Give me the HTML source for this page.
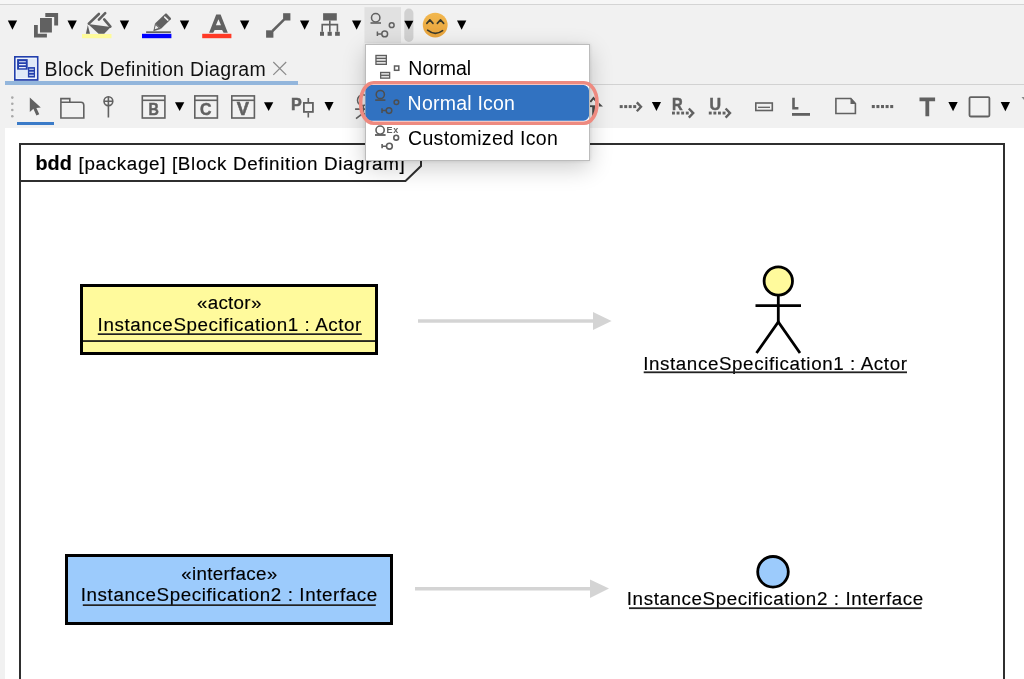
<!DOCTYPE html>
<html><head><meta charset="utf-8">
<style>
html,body{margin:0;padding:0;}
body{width:1024px;height:679px;position:relative;overflow:hidden;background:#f1f1f1;font-family:"Liberation Sans",sans-serif;}
.a{position:absolute;}
.tri{position:absolute;width:0;height:0;border-left:4.5px solid transparent;border-right:4.5px solid transparent;border-top:9px solid #000;}
svg{position:absolute;overflow:visible;will-change:transform;}
.dg{font-family:"Liberation Sans",sans-serif;color:#000;white-space:pre;}
</style></head><body>
<!-- top strip -->
<div class="a" style="left:0;top:0;width:1024px;height:4px;background:#f6f6f6"></div>
<div class="a" style="left:0;top:4px;width:1024px;height:1px;background:#d4d4d4"></div>

<!-- toolbar 1 -->


<!-- toolbar icons -->
<svg width="1024" height="679" style="left:0;top:0">
  <g fill="#000">
    <polygon points="7.8,20.6 17.1,20.6 12.45,29.8"/>
    <polygon points="67.5,20.6 76.8,20.6 72.15,29.8"/>
    <polygon points="119.8,20.6 129.1,20.6 124.45,29.8"/>
    <polygon points="179.9,20.6 189.2,20.6 184.55,29.8"/>
    <polygon points="240,20.6 249.3,20.6 244.65,29.8"/>
    <polygon points="300,20.6 309.3,20.6 304.65,29.8"/>
    <polygon points="352,20.6 361.3,20.6 356.65,29.8"/>
    <polygon points="457,20.6 466.3,20.6 461.65,29.8"/>
  </g>
  <!-- pressed button -->
  <rect x="364.4" y="7.1" width="36.6" height="36" fill="#e1e1e1"/>
  <rect x="404.3" y="8.6" width="9.1" height="33.3" rx="4.5" fill="#d1d1d1"/>
  <polygon points="404.3,20.7 413.4,20.7 408.85,29.5" fill="#000"/>
  <g fill="#616161">
    <!-- stack icon -->
    <path d="M45.3,13.1 H58.1 V25.6 H54.2 V17 H45.3 Z"/>
    <rect x="40" y="18" width="11.9" height="14.5"/>
    <path d="M34,24.9 H37.8 V33.8 H46.9 V37.5 H34 Z"/>
    <!-- bucket -->
    <polygon points="88,24 110.8,27 104.2,33.8 98.6,33.8"/>
    <polygon points="87.8,25 85.9,33.8 90,33.8"/>
    <!-- line icon -->
    <rect x="283.1" y="13.2" width="7.3" height="7.3"/>
    <rect x="266.1" y="30.3" width="7.3" height="7.4"/>
    <!-- tree -->
    <rect x="323.1" y="13.2" width="13.7" height="7.3"/>
    <rect x="320" y="31.8" width="4" height="4"/>
    <rect x="327.6" y="31.8" width="4.2" height="4"/>
    <rect x="335.1" y="31.8" width="4.7" height="4"/>
    <!-- A -->
    <path fill-rule="evenodd" d="M209.1,32.8 L216.2,14.6 L220.6,14.6 L227.8,32.8 L223.6,32.8 L222.1,29.9 L214.7,29.9 L213.2,32.8 Z M215.9,25.3 L221,25.3 L218.45,19.3 Z"/>
    <!-- pen -->
    <path d="M155,23.6 L165.5,13.6 Q166,13.2 166.5,13.6 L170.8,18 Q171.2,18.6 170.8,19.2 L160.8,29 Z"/>
    <polygon points="155,23.6 160.8,29 153.3,31.3"/>
    <rect x="146.1" y="31.3" width="24.8" height="1.7"/>
  </g>
  <g stroke="#616161" fill="none">
    <path d="M88.8,23.6 L98.9,14" stroke-width="2.6" stroke-linecap="round"/>
    <path d="M98.9,19.6 L105.2,13.2" stroke-width="2.6" stroke-linecap="round"/>
    <path d="M104.2,19.4 L110.4,26.6" stroke-width="2.6" stroke-linecap="round"/>
    <path d="M272.5,31 L284,19.6" stroke-width="2.5"/>
    <path d="M329.8,20.5 V31.8 M322.2,31.8 V24.6 H337.4 V31.8" stroke-width="1.6"/>
  </g>
  <g fill="#f1f1f1">
    <polygon points="155.7,25.3 158.6,28 154.7,29.3"/>
  </g>
  <path d="M164.7,17.1 L167.9,20.1" stroke="#f1f1f1" stroke-width="1.5" stroke-linecap="round"/>
  <!-- colour bars -->
  <rect x="82" y="34" width="29.5" height="4.2" fill="#fefb9b"/>
  <rect x="142" y="33.8" width="29.4" height="4.4" fill="#0000ff"/>
  <rect x="202.2" y="33.8" width="29.2" height="4.4" fill="#ff3a26"/>
  <!-- pressed icon -->
  <g stroke="#616161" fill="none" stroke-width="1.5">
    <circle cx="375.7" cy="17.8" r="4.2"/>
    <circle cx="391.7" cy="25.2" r="2.4"/>
    <circle cx="384.7" cy="33.9" r="2.9"/>
    <path d="M377.4,33.9 H381.8 M377.4,31.6 V36.1"/>
  </g>
  <rect x="370.5" y="22.2" width="10.5" height="1.6" fill="#616161"/>
  <!-- smiley -->
  <defs><linearGradient id="sm" x1="0" y1="0" x2="0" y2="1"><stop offset="0" stop-color="#f2b84f"/><stop offset="1" stop-color="#e7a23a"/></linearGradient></defs>
  <circle cx="435.2" cy="25.1" r="12.4" fill="url(#sm)"/>
  <g stroke="#3a3a2c" stroke-width="1.6" fill="none" stroke-linecap="round">
    <path d="M426.8,23.4 L429.9,19.9 L433,23.4" stroke-linejoin="round"/>
    <path d="M437.3,23.4 L440.5,19.9 L443.7,23.4" stroke-linejoin="round"/>
    <path d="M427.6,30.2 Q435,36.2 442.6,30.6"/>
  </g>
</svg>

<!-- tab row -->
<div class="a" style="left:5px;top:81px;width:293px;height:4px;background:#93b6dc"></div>
<div class="a" style="left:298px;top:84px;width:726px;height:1px;background:#d2d2d2"></div>
<svg width="1024" height="679" style="left:0;top:0"><text x="44.6" y="75.8" font-family="Liberation Sans" font-size="19.5" fill="#111" letter-spacing="0.33">Block Definition Diagram</text></svg>

<!-- toolbar 2 -->
<div class="a" style="left:17px;top:122px;width:37px;height:3px;background:#3b7bc8"></div>


<!-- tab icon + toolbar 2 icons -->
<svg width="1024" height="679" style="left:0;top:0">
  <!-- tab icon -->
  <rect x="14.85" y="56.85" width="22.8" height="23.1" fill="#dfe9f8" stroke="#2340ad" stroke-width="1.7"/>
  <rect x="16.3" y="58.3" width="19.9" height="20.2" fill="none" stroke="#f4f8fd" stroke-width="0.9"/>
  <rect x="17.1" y="59.1" width="10.6" height="10.6" fill="#2340ad"/>
  <rect x="27.9" y="67.1" width="7.1" height="10.4" fill="#2340ad"/>
  <g stroke="#e8eefa" stroke-width="1.1">
    <path d="M19,61.7 H25.8 M19,64.6 H25.8 M19,67.6 H25.8"/>
    <path d="M29.2,69.3 H33.8 M29.2,72.3 H33.8 M29.2,75.3 H33.8"/>
  </g>
  <!-- close x -->
  <path d="M273.3,62 L286.2,74.9 M286.2,62 L273.3,74.9" stroke="#8a8a8a" stroke-width="1.2"/>
  <!-- partial icon right of menu -->
  <g fill="#4a4a4a">
    <rect x="590" y="105.3" width="7" height="1.8"/>
    <rect x="592.2" y="106" width="2.8" height="10"/>
    <polygon points="599,102.8 603,106.4 599,106.4"/>
  </g>
  <path d="M590.3,102 L593.5,98 L596.7,101.6" stroke="#4a4a4a" stroke-width="2" fill="none"/>
  <polygon points="1021.5,97 1024,97 1024,100" fill="#888"/>
  <!-- grip dots -->
  <g fill="#a9a9a9">
    <circle cx="12.3" cy="97.6" r="1.3"/><circle cx="12.3" cy="103.8" r="1.3"/><circle cx="12.3" cy="110" r="1.3"/><circle cx="12.3" cy="116.2" r="1.3"/>
  </g>
  <g fill="#000">
    <polygon points="175,102.3 184.3,102.3 179.65,111.1"/>
    <polygon points="264,102.3 273.3,102.3 268.65,111.1"/>
    <polygon points="324.5,102.1 333.6,102.1 329.05,110.9"/>
    <polygon points="651.9,102.1 661,102.1 656.45,110.9"/>
    <polygon points="948.4,101.9 957.7,101.9 953.05,111.2"/>
    <polygon points="1000.7,101.9 1010,101.9 1005.35,111.2"/>
  </g>
  <g fill="#616161">
    <!-- arrow -->
    <polygon points="29.8,97.5 29.8,112 33.4,108.8 36.4,115.6 39.3,114.3 36.4,107.9 40.8,107.6"/>
    <!-- B letter -->
    <g font-family="Liberation Sans" font-weight="bold" stroke="#616161" stroke-width="0.5">
    <text transform="translate(148.4,114.9) scale(0.84,1)" font-size="17.1">B</text>
    <text transform="translate(200.1,115) scale(0.91,1)" font-size="17.4">C</text>
    <text transform="translate(236.8,114.9) scale(1.05,1)" font-size="17.5">V</text>
    <text transform="translate(290.9,109.8) scale(0.955,1)" font-size="16.9">P</text>
    <text transform="translate(671.9,109.6) scale(0.89,1)" font-size="16.7">R</text>
    <text transform="translate(709.4,109.6) scale(0.96,1)" font-size="16.7">U</text>
    </g>
    <!-- dotted arrows -->
    <rect x="619.7" y="105.1" width="3" height="3"/><rect x="624.2" y="105.1" width="3" height="3"/><rect x="628.7" y="105.1" width="3" height="3"/><rect x="633.2" y="105.1" width="3" height="3"/>
    <rect x="672" y="111.6" width="2.9" height="2.9"/><rect x="676.6" y="111.6" width="2.9" height="2.9"/><rect x="681.2" y="111.6" width="2.9" height="2.9"/><rect x="685.8" y="111.6" width="2.9" height="2.9"/>
    <rect x="708.8" y="111.6" width="2.9" height="2.9"/><rect x="713.4" y="111.6" width="2.9" height="2.9"/><rect x="718" y="111.6" width="2.9" height="2.9"/><rect x="722.6" y="111.6" width="2.9" height="2.9"/>
    <!-- L icon -->
    <path d="M792.2,97.7 H794.8 V106.9 H798.4 V109.6 H792.2 Z"/>
    <rect x="792" y="113" width="18" height="2.8"/>
    <!-- dotted line -->
    <rect x="871.8" y="105" width="3" height="3.1"/><rect x="876.4" y="105" width="3" height="3.1"/><rect x="881" y="105" width="3" height="3.1"/><rect x="885.6" y="105" width="3" height="3.1"/><rect x="890.2" y="105" width="3" height="3.1"/>
    <!-- T -->
    <path d="M919.5,97.5 H935.1 V101.2 H929.2 V116.3 H925.4 V101.2 H919.5 Z"/>
    <!-- note fold -->
    <polygon points="850.5,97.8 856.2,103.9 850.5,103.9"/>
  </g>
  <g stroke="#616161" fill="none" stroke-width="1.6">
    <!-- folder -->
    <path d="M60.9,102.6 V98.6 H69.8 V102.6 M60.9,102.3 H81 Q83.8,102.3 83.8,105.3 V118 H60.9 Z"/>
    <!-- pin -->
    <circle cx="108.4" cy="101.2" r="4.4"/>
    <path d="M104,101.2 H112.8 M108.4,96.8 V117.5"/>
    <!-- B C V boxes -->
    <rect x="142.3" y="95.9" width="22.6" height="22.1"/>
    <path d="M142.3,100.3 H164.9"/>
    <rect x="194.8" y="95.9" width="22.6" height="22.1"/>
    <path d="M194.8,100.3 H217.4"/>
    <rect x="231.8" y="95.9" width="22.6" height="22.1"/>
    <path d="M231.8,100.3 H254.4"/>
    <!-- port -->
    <rect x="303.9" y="102.9" width="9" height="9" stroke-width="1.8"/>
    <path d="M308.3,97.9 V102.9 M308.3,112.7 V117.4"/>
    <!-- chevrons -->
    <path d="M636.8,102.3 L641,106.7 L636.8,111.2" stroke-width="2.4"/>
    <path d="M688.8,108.5 L693.2,113.1 L688.8,117.7" stroke-width="2.4"/>
    <path d="M725.6,108.5 L730,113.1 L725.6,117.7" stroke-width="2.4"/>
    <!-- rect icon -->
    <rect x="755.8" y="103" width="16.5" height="7.5"/>
    <path d="M758,107.3 H770" stroke-width="1.3"/>
    <!-- note -->
    <path d="M835.9,98.5 H850.8 L855.4,103.6 V113.5 H835.9 Z"/>
    <!-- box -->
    <rect x="969.5" y="97.1" width="19.9" height="19.4" rx="1.2" stroke-width="1.8"/>
    <!-- partial actor under menu -->
    <circle cx="362.9" cy="100.2" r="5.4" stroke-width="1.5"/>
    <path d="M355.1,109.1 H371 M363.3,105.6 V113.2 M356,118.6 L363.3,113 L370.6,118.6" stroke-width="1.6"/>
  </g>
</svg>

<!-- canvas -->
<div class="a" style="left:5px;top:128px;width:1019px;height:551px;background:#fff"></div>

<!-- diagram frame -->
<div class="a" style="left:19px;top:143px;width:982px;height:600px;border:2px solid #2f2f2f;border-bottom:none"></div>
<svg width="1024" height="679" style="left:0;top:0">
  <polyline points="20,181 405.5,181 421,166 421,144" fill="none" stroke="#2f2f2f" stroke-width="2"/>
</svg>


<!-- actor block -->
<div class="a" style="left:80px;top:284px;width:292px;height:64.5px;border:3px solid #000;background:#fffa9c"></div>
<svg width="1024" height="679" style="left:0;top:0"><rect x="83" y="340.2" width="292" height="1.7" fill="#111"/><rect x="68" y="610.6" width="322.5" height="1.7" fill="#111"/></svg>

<!-- interface block -->
<div class="a" style="left:65px;top:554px;width:322px;height:64.5px;border:3px solid #000;background:#9ccbfc"></div>


<svg width="1024" height="679" style="left:0;top:0">
  <!-- arrows -->
  <line x1="418" y1="321" x2="595" y2="321" stroke="#d4d4d4" stroke-width="3.5"/>
  <polygon points="593,312 611.6,321 593,330" fill="#d4d4d4"/>
  <line x1="415" y1="588.8" x2="592" y2="588.8" stroke="#d4d4d4" stroke-width="3.5"/>
  <polygon points="590,579.5 609,588.5 590,598" fill="#d4d4d4"/>
  <!-- actor -->
  <circle cx="778.3" cy="281" r="14.2" fill="#fffa9c" stroke="#000" stroke-width="2.8"/>
  <line x1="778.3" y1="295" x2="778.3" y2="323" stroke="#000" stroke-width="2.8"/>
  <line x1="755.5" y1="305.6" x2="801" y2="305.6" stroke="#000" stroke-width="2.8"/>
  <polyline points="756.5,353 778.3,322 800,353" fill="none" stroke="#000" stroke-width="2.8"/>
  <!-- interface circle -->
  <circle cx="773" cy="571.8" r="15.3" fill="#9ccbfc" stroke="#000" stroke-width="2.8"/>
</svg>


<svg width="1024" height="679" style="left:0;top:0" id="txt">
  <g font-family="Liberation Sans" fill="#000" stroke="#000" stroke-width="0.15">
    <text x="35.5" y="169.7" font-size="19.8" font-weight="bold">bdd</text>
    <text x="78.6" y="169.7" font-size="18.8" letter-spacing="0.67">[package] [Block Definition Diagram]</text>
    <text x="229.3" y="309.4" font-size="18.8" text-anchor="middle" letter-spacing="0.3">«actor»</text>
    <text x="229.8" y="331.3" font-size="18.8" text-anchor="middle" letter-spacing="0.6">InstanceSpecification1 : Actor</text>
    <text x="229.3" y="580" font-size="18.8" text-anchor="middle" letter-spacing="0.3">«interface»</text>
    <text x="229.3" y="601" font-size="18.8" text-anchor="middle" letter-spacing="0.6">InstanceSpecification2 : Interface</text>
    <text x="775.35" y="369.9" font-size="18.8" text-anchor="middle" letter-spacing="0.6">InstanceSpecification1 : Actor</text>
    <text x="775.35" y="605" font-size="18.8" text-anchor="middle" letter-spacing="0.6">InstanceSpecification2 : Interface</text>
  </g>
  <g fill="#222">
    <rect x="97.8" y="333.3" width="264" height="1.7"/>
    <rect x="82.8" y="604.3" width="293" height="1.7"/>
    <rect x="643.7" y="371.4" width="263.3" height="1.8"/>
    <rect x="629" y="607.3" width="292.7" height="1.8"/>
  </g>
</svg>

<!-- popup menu -->
<div class="a" style="left:364.5px;top:44px;width:223.5px;height:115px;background:#fff;border:1px solid #bcbcbc;box-shadow:0 0 4px rgba(0,0,0,0.12),0 7px 22px rgba(0,0,0,0.2)"></div>
<svg width="1024" height="679" style="left:0;top:0">
  <rect x="365.5" y="85.1" width="223.5" height="35.6" rx="5.5" fill="#3172c1"/>
  <g font-family="Liberation Sans" font-size="19.5">
    <text x="408.3" y="74.8" fill="#000">Normal</text>
    <text x="407.6" y="110" fill="#fff" letter-spacing="0.22">Normal Icon</text>
    <text x="408" y="144.6" fill="#000" letter-spacing="0.33">Customized Icon</text>
  </g>
  <!-- normal icon -->
  <g fill="none" stroke="#5e5e5e" stroke-width="1.3">
    <rect x="375.95" y="55.45" width="10.4" height="8.9" fill="#e2e2e2"/>
    <path d="M375.95,58.4 H386.35 M375.95,61.4 H386.35"/>
    <rect x="380.65" y="72.45" width="9" height="5.7" fill="#e2e2e2"/>
    <path d="M380.65,75.3 H389.65"/>
    <rect x="394.5" y="66" width="4.3" height="4.3" stroke-width="1.5"/>
  </g>
  <!-- normal icon (selected) -->
  <g fill="none" stroke="#4e4e4e" stroke-width="1.5">
    <circle cx="380.3" cy="94.5" r="4.1"/>
    <circle cx="396.4" cy="102.3" r="2.3"/>
    <circle cx="389" cy="110.6" r="2.8"/>
    <path d="M382,110.6 H386.2 M382,108.2 V113.1"/>
  </g>
  <rect x="375.2" y="99.3" width="10.2" height="1.6" fill="#4e4e4e"/>
  <!-- customized icon -->
  <g fill="none" stroke="#5e5e5e" stroke-width="1.6">
    <circle cx="380.1" cy="130.1" r="4.1"/>
    <circle cx="396.2" cy="137.7" r="2.4"/>
    <circle cx="389.4" cy="146.2" r="2.9"/>
    <path d="M382.2,146.2 H386.4 M382.1,143.9 V148.2"/>
  </g>
  <rect x="375" y="134.1" width="10.6" height="1.8" fill="#5e5e5e"/>
  <text x="386.6" y="132.8" font-family="Liberation Sans" font-weight="bold" font-size="9" letter-spacing="0.6" fill="#5e5e5e">Ex</text>
  <!-- red ring -->
  <rect x="360.7" y="82.7" width="236.2" height="40.5" rx="13" ry="19" fill="none" stroke="#ee8a80" stroke-width="3.6"/>
</svg>
</body></html>
